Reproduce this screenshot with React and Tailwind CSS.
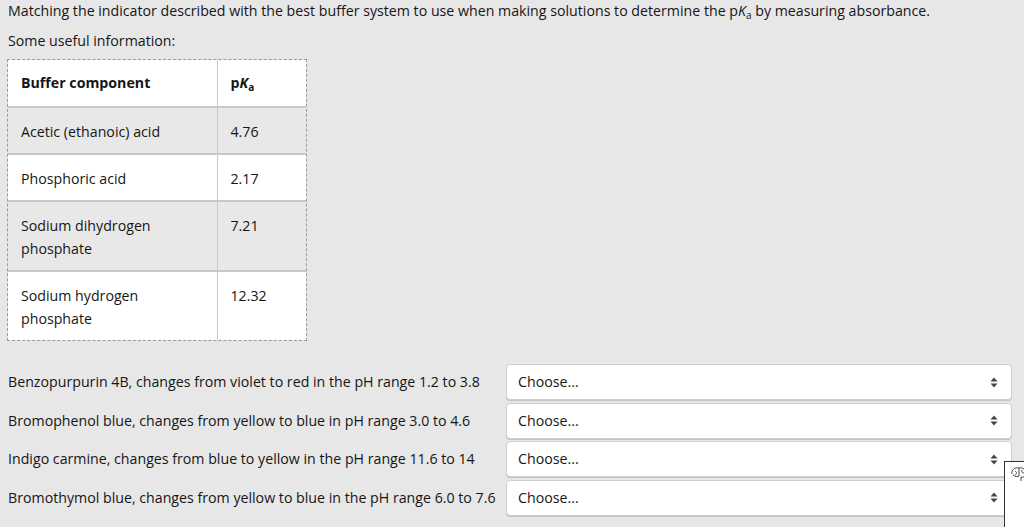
import React from "react";

const rows = [
    { name: ["Acetic (ethanoic) acid"], pka: "4.76", shade: true },
    { name: ["Phosphoric acid"], pka: "2.17", shade: false },
    { name: ["Sodium dihydrogen", "phosphate"], pka: "7.21", shade: true },
    { name: ["Sodium hydrogen", "phosphate"], pka: "12.32", shade: false },
];

const questions = [
    "Benzopurpurin 4B, changes from violet to red in the pH range 1.2 to 3.8",
    "Bromophenol blue, changes from yellow to blue in pH range 3.0 to 4.6",
    "Indigo carmine, changes from blue to yellow in the pH range 11.6 to 14",
    "Bromothymol blue, changes from yellow to blue in the pH range 6.0 to 7.6",
];

const SortArrows = () => (
    <svg width="8" height="11" viewBox="0 0 8 11" className="text-[#444]">
        <path d="M4 0.5 L7.5 4.5 L0.5 4.5 Z" fill="currentColor" />
        <path d="M4 10.5 L7.5 6.5 L0.5 6.5 Z" fill="currentColor" />
    </svg>
);

const App = () => {
    return (
        <div
            className="relative w-[1024px] h-[527px] overflow-hidden bg-[#e7e7e7] text-[#161616] px-2 text-[14.2px]"
            style={{ fontFamily: '"Open Sans", "Noto Sans", sans-serif' }}
        >
            <p className="leading-[22px]">
                Matching the indicator described with the best buffer system to use when making solutions to determine the p
                <i>K</i>
                <sub className="text-[10px]">a</sub> by measuring absorbance.
            </p>
            <p className="mt-2 leading-[22px]">Some useful information:</p>

            <div className="mt-[7px] -ml-px w-[300px] border border-dashed border-[#9a9a9a]">
                <table className="w-full border-collapse">
                    <tbody>
                        <tr className="bg-white">
                            <th className="w-[209px] border-r border-b-2 border-[#c8c8c8] px-[13px] h-[47px] text-left font-bold">
                                Buffer component
                            </th>
                            <th className="border-b-2 border-[#c8c8c8] px-[13px] text-left font-bold">
                                p<i>K</i>
                                <sub className="text-[10px]">a</sub>
                            </th>
                        </tr>
                        {rows.map((r, i) => (
                            <tr key={i} className={r.shade ? "bg-[#e8e8e8]" : "bg-white"}>
                                <td
                                    className={
                                        "border-r border-[#c8c8c8] px-[13px] pt-[12px] pb-[10px] align-top leading-[23px] " +
                                        (i < rows.length - 1 ? "border-b-2" : "")
                                    }
                                >
                                    {r.name.map((n) => (
                                        <div key={n}>{n}</div>
                                    ))}
                                </td>
                                <td
                                    className={
                                        "border-[#c8c8c8] px-[13px] pt-[12px] pb-[10px] align-top leading-[23px] " +
                                        (i < rows.length - 1 ? "border-b-2" : "")
                                    }
                                >
                                    {r.pka}
                                </td>
                            </tr>
                        ))}
                    </tbody>
                </table>
            </div>

            <div className="mt-[23px] flex flex-col gap-[2.5px] pr-[4px]">
                {questions.map((q) => (
                    <div key={q} className="flex items-center">
                        <div className="w-[498px]">{q}</div>
                        <div className="flex h-[36px] flex-1 items-center justify-between rounded-[4px] border border-[#cfcfcf] bg-white pl-[11px] pr-[13px] shadow-[0_1px_0_#c4c4c4]">
                            <span>Choose...</span>
                            <SortArrows />
                        </div>
                    </div>
                ))}
            </div>

            <div className="absolute left-[1004px] top-[461px] h-[80px] w-[40px] border border-[#333] bg-white">
                <svg width="18" height="16" viewBox="0 0 18 16" className="absolute left-[5px] top-[4px]">
                    <path
                        d="M2 8 C1 4 5 1 9 2 C13 1 16 4 15 7 C16 10 13 12 11 11 L11 15 M9 2 L9 10 M5 5 C7 6 7 8 5 9 M12 4 C11 6 13 7 14 7 M3 9 C5 11 8 11 9 10"
                        fill="none"
                        stroke="#444"
                        strokeWidth="1"
                    />
                </svg>
            </div>
        </div>
    );
};

export default App;
